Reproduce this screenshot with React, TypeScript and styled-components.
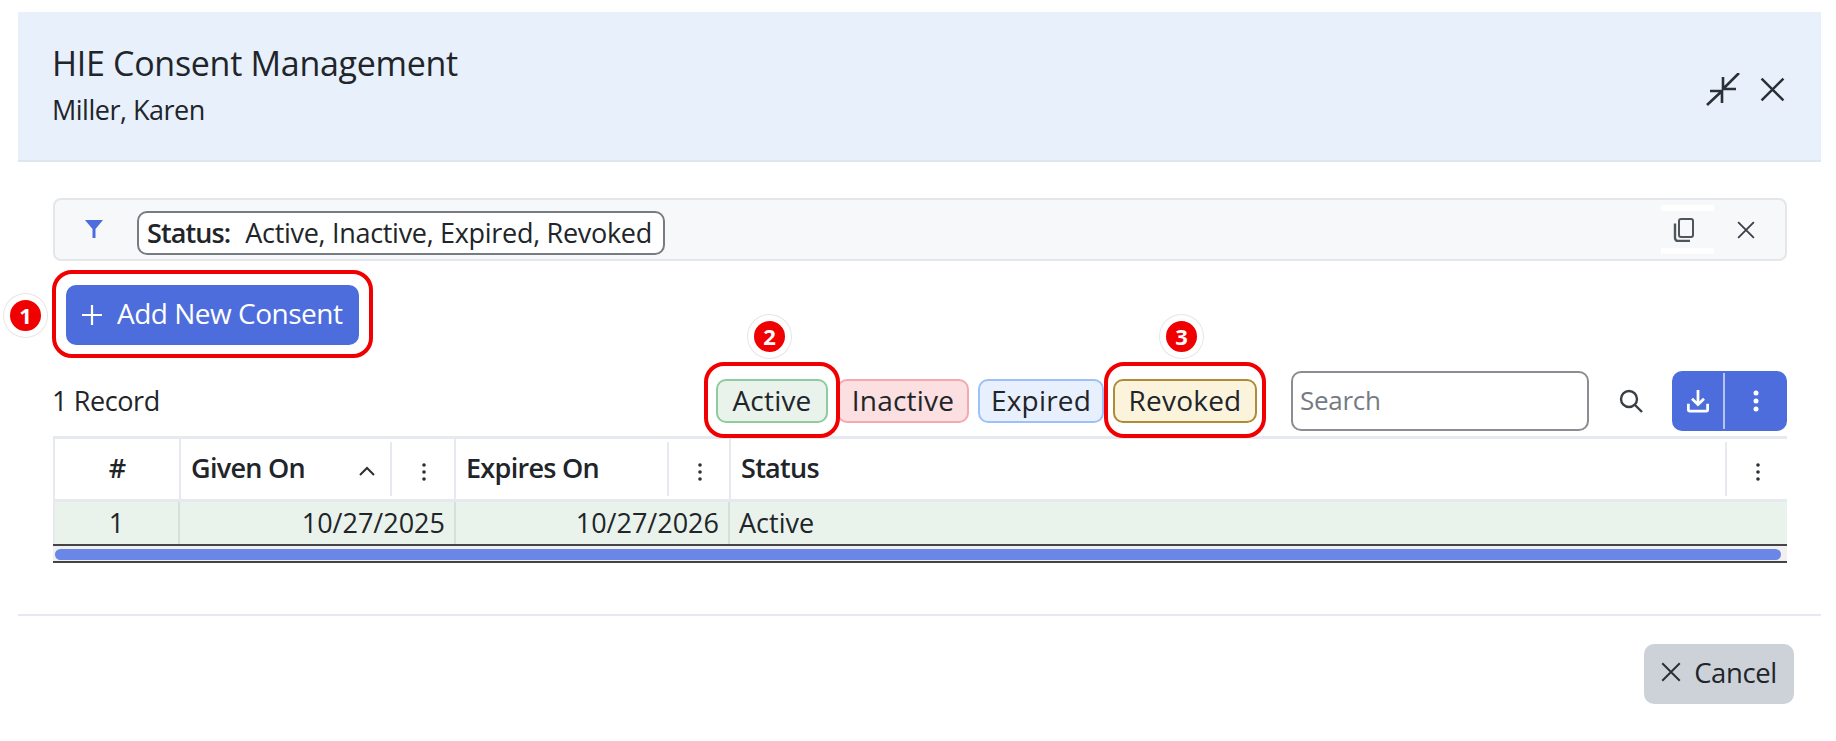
import React from "react";
import styled, { createGlobalStyle } from "styled-components";

const GlobalStyle = createGlobalStyle`
  html, body {
    margin: 0;
    padding: 0;
    background: #fff;
    font-family: "Open Sans", "Liberation Sans", sans-serif;
    color: #212529;
  }
`

const Page = styled.div`
  width: 1836px;
  height: 741px;
  box-sizing: border-box;
  padding: 12px 15px 0 18px;
  overflow: hidden;
`

const Header = styled.header`
  height: 150px;
  box-sizing: border-box;
  padding: 0 35px 4px 34px;
  background: #e8f0fc;
  border-bottom: 2px solid #e0e6f0;
  display: flex;
  align-items: center;
  justify-content: space-between;
`

const Title = styled.h1`
  margin: 0;
  font-size: 34px;
  line-height: 44px;
  font-weight: 400;
  letter-spacing: -0.3px;
`

const Subtitle = styled.div`
  margin-top: 7px;
  font-size: 27px;
  line-height: 36px;
  letter-spacing: -0.5px;
`

const HeaderIcons = styled.div`
  display: flex;
  align-items: center;
  gap: 20px;
  margin-right: 1px;
  margin-top: 10px;
`

const Body = styled.main`
  padding: 36px 34px 0 35px;
`

const FilterBar = styled.div`
  height: 63px;
  box-sizing: border-box;
  padding: 0 30px 0 30px;
  background: #f6f8fa;
  border: 2px solid #e4e6ea;
  border-radius: 8px;
  display: flex;
  align-items: center;
`

const FilterChip = styled.div`
  margin: 6px 0 0 34px;
  width: 528px;
  height: 44px;
  box-sizing: border-box;
  padding: 0 0 1px 8px;
  background: #fff;
  border: 2px solid #777c82;
  border-radius: 10px;
  display: flex;
  align-items: center;
  white-space: pre;
  font-size: 27px;
  letter-spacing: -0.3px;
  b {
    font-weight: 600;
    margin-right: 15px;
    letter-spacing: -0.9px;
  }
`

const FunnelSlot = styled.span`
  display: flex;
  margin-bottom: 2px;
`

const CopyButton = styled.div`
  margin-left: auto;
  width: 53px;
  height: 49px;
  box-sizing: border-box;
  padding-right: 8px;
  border-top: 6px solid #fff;
  border-bottom: 6px solid #fff;
  display: flex;
  align-items: center;
  justify-content: center;
`

const BarClose = styled.div`
  margin-left: 23px;
  display: flex;
`

const AddRow = styled.div`
  margin-top: 24px;
  padding-left: 13px;
  display: flex;
`

const Marked = styled.div`
  position: relative;
  display: inline-flex;
`

const Highlight = styled.span<{ $x: number; $top: number; $bottom: number }>`
  position: absolute;
  left: -${(p) => p.$x}px;
  right: -${(p) => p.$x}px;
  top: -${(p) => p.$top}px;
  bottom: -${(p) => p.$bottom}px;
  border: 4px solid #f00000;
  border-radius: 20px;
  pointer-events: none;
`

const Badge = styled.span<{ $left: number; $top: number }>`
  position: absolute;
  left: ${(p) => p.$left}px;
  top: ${(p) => p.$top}px;
  width: 31px;
  height: 31px;
  border-radius: 50%;
  background: #f00000;
  border: 2px solid #fff;
  box-shadow: 0 0 0 4px #fff, 0 0 0 5px #e6e6e6;
  color: #fff;
  font-size: 22px;
  font-weight: 700;
  line-height: 31px;
  text-align: center;
`

const AddButton = styled.button`
  width: 293px;
  height: 60px;
  padding: 0 0 4px 16px;
  border: 0;
  border-radius: 10px;
  background: #4d6ddd;
  color: #fff;
  font: inherit;
  font-size: 28px;
  letter-spacing: -0.5px;
  display: flex;
  align-items: center;
  gap: 15px;
  svg {
    margin-top: 4px;
  }
`

const Toolbar = styled.div`
  margin-top: 26px;
  height: 60px;
  display: flex;
  align-items: center;
`

const RecordCount = styled.div`
  font-size: 27px;
  letter-spacing: -0.4px;
  margin: 0 auto 2px -1px;
`

const StatusChips = styled.div`
  display: flex;
  gap: 9px;
  margin-right: 34px;
`

const palette = {
  active: { bg: "#e9f3ec", border: "#8fcaa0" },
  inactive: { bg: "#fbdfe1", border: "#f3a9ae" },
  expired: { bg: "#e8f0fd", border: "#9dc0f8" },
  revoked: { bg: "#fcf3dc", border: "#ad8c35" },
};

const StatusChip = styled.div<{ $kind: keyof typeof palette; $width: number }>`
  width: ${(p) => p.$width}px;
  height: 44px;
  box-sizing: border-box;
  padding-bottom: 2px;
  border-radius: 10px;
  border: 2px solid ${(p) => palette[p.$kind].border};
  background: ${(p) => palette[p.$kind].bg};
  font-size: 28px;
  letter-spacing: 0.2px;
  display: flex;
  align-items: center;
  justify-content: center;
`

const SearchInput = styled.input`
  width: 298px;
  height: 60px;
  box-sizing: border-box;
  padding: 0 7px 2px;
  border: 2px solid #8a8d91;
  border-radius: 10px;
  background: #fff;
  font: inherit;
  font-size: 26px;
  letter-spacing: -0.3px;
  outline: none;
  &::placeholder {
    color: #757b82;
    opacity: 1;
  }
`

const SearchIcon = styled.div`
  width: 83px;
  display: flex;
  justify-content: center;
`

const ActionGroup = styled.div`
  width: 115px;
  height: 60px;
  border-radius: 10px;
  background: #4d6ddd;
  display: flex;
  align-items: center;
`

const ActionPart = styled.div<{ $divided?: boolean }>`
  flex: ${(p) => (p.$divided ? "1" : "0 0 51px")};
  height: 56px;
  display: flex;
  align-items: center;
  justify-content: center;
  border-left: ${(p) => (p.$divided ? "2px solid #b7c4f0" : "none")};
`

const Grid = styled.div`
  margin-top: 5px;
  border-top: 3px solid #e6e9ef;
`

const HeaderRow = styled.div`
  height: 63px;
  box-sizing: border-box;
  display: grid;
  grid-template-columns: 126px 275px 275px 1fr;
  border-bottom: 3px solid #e6e9ef;
  border-left: 2px solid #e6e9ef;
`

const HeaderCell = styled.div<{ $center?: boolean }>`
  display: flex;
  align-items: center;
  justify-content: ${(p) => (p.$center ? "center" : "flex-start")};
  padding-left: ${(p) => (p.$center ? "0" : "10px")};
  padding-bottom: 3px;
  border-right: 2px solid #e6e9ef;
  font-size: 27px;
  font-weight: 600;
  letter-spacing: -0.7px;
  &:last-child {
    border-right: 0;
  }
`

const SortIcon = styled.span`
  margin-left: auto;
  display: flex;
  margin-top: 6px;
  margin-right: 15px;
`

const ColumnMenu = styled.span<{ $auto?: boolean }>`
  align-self: flex-end;
  margin-left: ${(p) => (p.$auto ? "auto" : "0")};
  width: ${(p) => (p.$auto ? "62px" : "64px")};
  height: 54px;
  box-sizing: border-box;
  border-left: 2px solid #e6e9ef;
  display: flex;
  align-items: center;
  justify-content: center;
  padding: 6px 0 0 2px;
`

const DataRow = styled.div`
  height: 42px;
  box-sizing: border-box;
  background: #e9f3ec;
  display: grid;
  grid-template-columns: 125px 276px 274px 1fr;
  border-left: 2px solid #e6e9ef;
`

const DataCell = styled.div<{ $align?: string }>`
  display: flex;
  align-items: center;
  justify-content: ${(p) => p.$align || "flex-start"};
  padding: 0 9px 2px 9px;
  border-right: 2px solid #d6dfd9;
  font-size: 27px;
  &:last-child {
    border-right: 0;
  }
`

const Scroller = styled.div`
  height: 19px;
  box-sizing: border-box;
  padding: 2px 6px 1px 2px;
  border-top: 2px solid #444;
  border-bottom: 2px solid #444;
  background: #f1eff0;
  display: flex;
  align-items: center;
`

const ScrollThumb = styled.div`
  flex: 1;
  height: 11px;
  border-radius: 6px;
  background: #6a86e6;
`

const FooterBar = styled.footer`
  margin-top: 51px;
  padding: 28px 0 0;
  border-top: 2px solid #e6e9ef;
  display: flex;
  justify-content: flex-end;
`

const CancelButton = styled.button`
  width: 150px;
  height: 60px;
  margin-right: 27px;
  padding: 0 0 4px;
  border: 0;
  border-radius: 10px;
  background: #cdd2d9;
  color: #212529;
  font: inherit;
  font-size: 27.5px;
  letter-spacing: -0.4px;
  display: flex;
  align-items: center;
  justify-content: center;
  gap: 13px;
`

const CloseIcon = ({ size, color = "#2b3036" }: { size: number; color?: string }) => (
  <svg width={size} height={size} viewBox="0 0 24 24" fill="none" stroke={color} strokeWidth="2.4">
    <path d="M1.5 1.5l21 21M22.5 1.5l-21 21" />
  </svg>
);

const CompressIcon = () => (
  <svg width="34" height="33" viewBox="0 0 34 33" fill="none" stroke="#2b3036" strokeWidth="2.6">
    <path d="M33 0L17 16M17 4v12h13" />
    <path d="M1 32L16 18M4 18h12v12" />
  </svg>
);

const FunnelIcon = () => (
  <svg width="18" height="18" viewBox="0 0 18 18" fill="#4d6ddd">
    <path d="M0 0h18L10.500 9v9h-3V9z" />
  </svg>
);

const CopyIcon = () => (
  <svg width="21" height="24" viewBox="0 0 21 24" fill="none" stroke="#50555b" strokeWidth="2">
    <rect x="6" y="1" width="14" height="18" rx="2" />
    <path d="M2 5.500V20a3 3 0 0 0 3 3h12" strokeWidth="2.400" />
  </svg>
);

const MagnifierIcon = () => (
  <svg width="24" height="24" viewBox="0 0 24 24" fill="none" stroke="#3a3f45" strokeWidth="2.4">
    <circle cx="10" cy="10" r="8" />
    <path d="M16 16l7 7" />
  </svg>
);

const DownloadIcon = () => (
  <svg width="22" height="24" viewBox="0 0 24 26" fill="none" stroke="#fff" strokeWidth="3">
    <path d="M12 1v15M5.500 10.500L12 17l6.500-6.500" />
    <path d="M1.500 16v6.500a1.500 1.500 0 0 0 1.500 1.500h18a1.500 1.500 0 0 0 1.500-1.500V16" />
  </svg>
);

const Kebab = () => (
  <svg width="6" height="20" viewBox="0 0 6 20" fill="#2b3036">
    <circle cx="3" cy="3" r="1.800" />
    <circle cx="3" cy="10" r="1.800" />
    <circle cx="3" cy="17" r="1.800" />
  </svg>
);

const WhiteKebab = () => (
  <svg width="6" height="22" viewBox="0 0 6 22" fill="#fff">
    <circle cx="3" cy="3" r="2.500" />
    <circle cx="3" cy="11" r="2.500" />
    <circle cx="3" cy="19" r="2.500" />
  </svg>
);

const ChevronUp = () => (
  <svg width="16" height="10" viewBox="0 0 16 10" fill="none" stroke="#2b3036" strokeWidth="2">
    <path d="M1 9l7-7 7 7" />
  </svg>
);

const App: React.FC = () => {
  return (
    <>
      <GlobalStyle />
      <Page>
        <Header>
          <div>
            <Title>HIE Consent Management</Title>
            <Subtitle>Miller, Karen</Subtitle>
          </div>
          <HeaderIcons>
            <CompressIcon />
            <CloseIcon size={25} />
          </HeaderIcons>
        </Header>
        <Body>
          <FilterBar>
            <FunnelSlot>
              <FunnelIcon />
            </FunnelSlot>
            <FilterChip>
              <b>Status:</b>Active, Inactive, Expired, Revoked
            </FilterChip>
            <CopyButton>
              <CopyIcon />
            </CopyButton>
            <BarClose>
              <CloseIcon size={18} color="#3a3f45" />
            </BarClose>
          </FilterBar>
          <AddRow>
            <Marked>
              <AddButton>
                <svg width="20" height="20" viewBox="0 0 20 20" stroke="#fff" strokeWidth="2.2">
                  <path d="M10 0v20M0 10h20" />
                </svg>
                Add New Consent
              </AddButton>
              <Highlight $x={14} $top={15} $bottom={13} />
              <Badge $left={-58} $top={13}>1</Badge>
            </Marked>
          </AddRow>
          <Toolbar>
            <RecordCount>1 Record</RecordCount>
            <StatusChips>
              <Marked>
                <StatusChip $kind="active" $width={112}>Active</StatusChip>
                <Highlight $x={12} $top={17} $bottom={15} />
                <Badge $left={36} $top={-60}>2</Badge>
              </Marked>
              <StatusChip $kind="inactive" $width={132}>Inactive</StatusChip>
              <StatusChip $kind="expired" $width={126}>Expired</StatusChip>
              <Marked>
                <StatusChip $kind="revoked" $width={144}>Revoked</StatusChip>
                <Highlight $x={9} $top={17} $bottom={15} />
                <Badge $left={51} $top={-60}>3</Badge>
              </Marked>
            </StatusChips>
            <SearchInput placeholder="Search" />
            <SearchIcon>
              <MagnifierIcon />
            </SearchIcon>
            <ActionGroup>
              <ActionPart>
                <DownloadIcon />
              </ActionPart>
              <ActionPart $divided>
                <WhiteKebab />
              </ActionPart>
            </ActionGroup>
          </Toolbar>
          <Grid>
            <HeaderRow>
              <HeaderCell $center>#</HeaderCell>
              <HeaderCell>
                Given On
                <SortIcon>
                  <ChevronUp />
                </SortIcon>
                <ColumnMenu>
                  <Kebab />
                </ColumnMenu>
              </HeaderCell>
              <HeaderCell>
                Expires On
                <ColumnMenu $auto>
                  <Kebab />
                </ColumnMenu>
              </HeaderCell>
              <HeaderCell>
                Status
                <ColumnMenu $auto>
                  <Kebab />
                </ColumnMenu>
              </HeaderCell>
            </HeaderRow>
            <DataRow>
              <DataCell $align="center">1</DataCell>
              <DataCell $align="flex-end">10/27/2025</DataCell>
              <DataCell $align="flex-end">10/27/2026</DataCell>
              <DataCell>Active</DataCell>
            </DataRow>
            <Scroller>
              <ScrollThumb />
            </Scroller>
          </Grid>
        </Body>
        <FooterBar>
          <CancelButton>
            <CloseIcon size={20} />
            Cancel
          </CancelButton>
        </FooterBar>
      </Page>
    </>
  );
};

export default App;
